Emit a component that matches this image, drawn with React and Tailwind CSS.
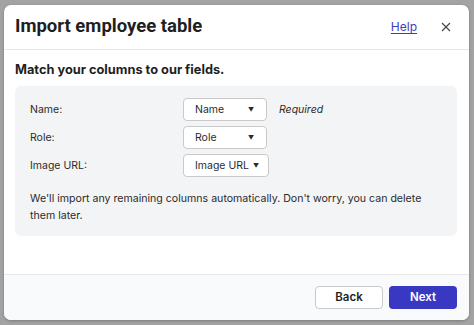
import React from "react";

function Select({ label, w, pr }) {
  return (
    <div
      className={`flex h-[23px] items-center justify-between rounded-[4px] border border-[#c9c9c9] bg-white pl-[11px] ${w} ${pr}`}
    >
      <span className="whitespace-nowrap text-[10.5px] text-[#2b2b2b]">{label}</span>
      <span className="text-[6px] text-[#2b2b2b]">▼</span>
    </div>
  );
}

export default function App() {
  const rows = [
    { name: "Name:", value: "Name", w: "w-[84px]", pr: "pr-[12px]", required: true },
    { name: "Role:", value: "Role", w: "w-[84px]", pr: "pr-[12px]" },
    { name: "Image URL:", value: "Image URL", w: "w-[86px]", pr: "pr-[9px]" },
  ];
  return (
    <div
      className="h-[325px] w-[474px] bg-[#a3a3a3] pl-[4px] pt-[5px]"
      style={{ fontFamily: "Inter, 'Noto Sans', sans-serif" }}
    >
      <div className="flex h-[315px] w-[465px] flex-col overflow-hidden rounded-[7px] bg-white shadow-[0_1px_3px_rgba(0,0,0,0.25)]">
        <div className="flex h-[45px] shrink-0 items-center border-b border-[#e8e8ea] pl-[11px] pr-[18px]">
          <h1
            className="flex-1 text-[18.5px] font-bold text-[#1f1f1f]"
            style={{ fontFamily: "Roboto, Inter, sans-serif" }}
          >
            Import employee table
          </h1>
          <a className="mr-[24px] text-[12px] text-[#3c3cc0] underline underline-offset-2">
            Help
          </a>
          <svg width="10" height="10" viewBox="0 0 10 10" className="text-[#444]">
            <path d="M1 1L9 9M9 1L1 9" stroke="currentColor" strokeWidth="1.1" />
          </svg>
        </div>
        <div className="flex-1 pl-[11px] pr-[12px] pt-[10px]">
          <h2 className="mb-[6px] text-[12.8px] font-bold leading-[20px] text-[#1f1f1f]">
            Match your columns to our fields.
          </h2>
          <div className="rounded-[6px] bg-[#f3f4f6] pb-[12px] pl-[15px] pr-[15px] pt-[12px]">
            <div className="flex flex-col gap-[5px]">
              {rows.map((r) => (
                <div key={r.name} className="flex items-center">
                  <span className="w-[153px] text-[10.5px] text-[#2b2b2b]">{r.name}</span>
                  <Select label={r.value} w={r.w} pr={r.pr} />
                  {r.required && (
                    <span className="ml-[12px] text-[10.5px] italic text-[#2b2b2b]">Required</span>
                  )}
                </div>
              ))}
            </div>
            <p className="mt-[13px] text-[10.6px] leading-[17px] text-[#2b2b2b]">
              We'll import any remaining columns automatically. Don't worry, you can delete them later.
            </p>
          </div>
        </div>
        <div className="flex h-[46px] shrink-0 items-center justify-end gap-[6px] border-t border-[#e8e8ea] bg-[#f9fafb] pr-[12px]">
          <button className="h-[23px] w-[68px] rounded-[4px] border border-[#c9c9c9] bg-white text-[11.5px] font-semibold text-[#1f1f1f]">
            Back
          </button>
          <button className="h-[23px] w-[68px] rounded-[4px] bg-[#3838c2] text-[11.5px] font-semibold text-white">
            Next
          </button>
        </div>
      </div>
    </div>
  );
}
